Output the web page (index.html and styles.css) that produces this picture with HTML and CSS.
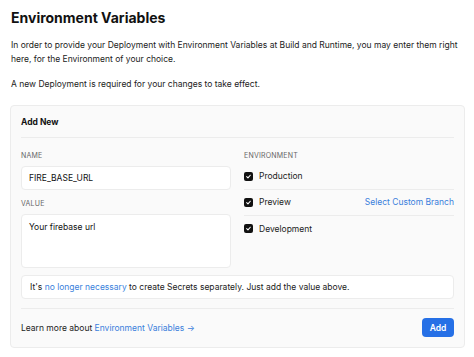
FILE: index.html
```html
<!DOCTYPE html>
<html>
<head>
<meta charset="utf-8">
<link rel="stylesheet" href="styles.css">
</head>
<body>
<h1 class="title">Environment Variables</h1>
<p class="desc">In order to provide your Deployment with Environment Variables at Build and Runtime, you may enter them right here, for the Environment of your choice.</p>
<p class="desc">A new Deployment is required for your changes to take effect.</p>
<div class="card">
  <div class="card-head">Add New</div>
  <div class="card-body">
    <div class="cols">
      <div class="col">
        <div class="label">NAME</div>
        <div class="input">FIRE_BASE_URL</div>
        <div class="label label-value">VALUE</div>
        <div class="input textarea">Your firebase url</div>
      </div>
      <div class="col">
        <div class="label label-env">ENVIRONMENT</div>
        <div class="env-row"><span class="check"><svg viewBox="0 0 10 10" width="10" height="10"><path d="M3 5.2 L4.4 6.5 L7 3.6" fill="none" stroke="#fff" stroke-width="1.2" stroke-linecap="round" stroke-linejoin="round"/></svg></span><span class="env-name">Production</span></div>
        <div class="env-row"><span class="check"><svg viewBox="0 0 10 10" width="10" height="10"><path d="M3 5.2 L4.4 6.5 L7 3.6" fill="none" stroke="#fff" stroke-width="1.2" stroke-linecap="round" stroke-linejoin="round"/></svg></span><span class="env-name">Preview</span><span class="link branch">Select Custom Branch</span></div>
        <div class="env-row last"><span class="check"><svg viewBox="0 0 10 10" width="10" height="10"><path d="M3 5.2 L4.4 6.5 L7 3.6" fill="none" stroke="#fff" stroke-width="1.2" stroke-linecap="round" stroke-linejoin="round"/></svg></span><span class="env-name">Development</span></div>
      </div>
    </div>
    <div class="note"><span>It's <span class="link">no longer necessary</span> to create Secrets separately. Just add the value above.</span></div>
  </div>
  <div class="card-foot">
    <div class="learn">Learn more about <span class="link">Environment Variables →</span></div>
    <button class="btn">Add</button>
  </div>
</div>
</body>
</html>
```
FILE: styles.css
```css
* { box-sizing: border-box; }
body {
  margin: 0;
  padding: 7px 8px 0 11px;
  font-family: Inter, "Noto Sans", sans-serif;
  color: #111;
  background: #fff;
}
.title {
  font-size: 14px;
  font-weight: 700;
  margin: 0 0 10px;
  line-height: 22px;
}
.desc {
  font-size: 8.5px;
  line-height: 13.5px;
  margin: 0 0 12px;
  color: #222;
}
.card {
  margin-top: 13px;
  width: 455px;
  margin-left: -1px;
  background: #fafafa;
  border: 1px solid #ececec;
  border-radius: 4px;
  padding: 0 10px;
}
.card-head {
  height: 32px;
  padding-top: 2px;
  display: flex;
  align-items: center;
  font-size: 8.5px;
  font-weight: 700;
  border-bottom: 1px solid #ececec;
}
.card-body {
  padding: 12px 0 9px;
  border-bottom: 1px solid #ececec;
}
.cols {
  display: flex;
  gap: 13px;
}
.col { flex: 1; }
.label {
  font-size: 7px;
  color: #666;
  letter-spacing: 0.2px;
  height: 11px;
  line-height: 11px;
  margin-bottom: 5px;
}
.label-value { margin-top: 8px; }
.label-env { margin-bottom: 3px; }
.input {
  height: 24px;
  background: #fff;
  border: 1px solid #ececec;
  border-radius: 4px;
  padding: 0 7px;
  font-size: 8.5px;
  line-height: 22px;
  color: #111;
}
.textarea {
  height: 54px;
  padding-top: 1px;
}
.env-row {
  height: 26px;
  display: flex;
  align-items: center;
  border-bottom: 1px solid #ececec;
  font-size: 8.5px;
  color: #222;
}
.env-row.last { border-bottom: none; }
.check {
  width: 9px;
  height: 9px;
  background: #111;
  border-radius: 2px;
  display: inline-flex;
  align-items: center;
  justify-content: center;
  margin-right: 6px;
}
.check svg { width: 9px; height: 9px; }
.env-name { flex: 1; }
.link { color: #3a7fdc; }
.branch { font-size: 8.5px; }
.note {
  margin-top: 7px;
  height: 24px;
  background: #fff;
  border: 1px solid #ececec;
  border-radius: 4px;
  display: flex;
  align-items: center;
  padding: 0 8px;
  font-size: 8.5px;
  color: #222;
}
.card-foot {
  height: 38px;
  display: flex;
  align-items: center;
  justify-content: space-between;
}
.learn { font-size: 8.5px; color: #222; }
.btn {
  font-family: Inter, sans-serif;
  border: none;
  background: #2670e6;
  color: #fff;
  font-size: 8.5px;
  font-weight: 600;
  width: 32px;
  height: 19px;
  border-radius: 4px;
  padding: 0;
}
```
